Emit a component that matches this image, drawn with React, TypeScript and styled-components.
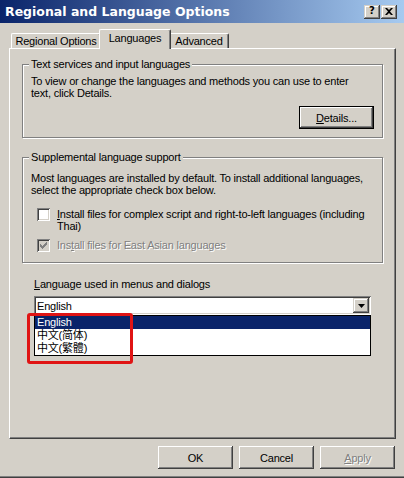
import styled, { createGlobalStyle } from 'styled-components'

const GlobalStyle = createGlobalStyle`
    html, body {
        margin: 0;
        padding: 0;
        background: #d4d0c8;
    }
    body {
        font-family: "Liberation Sans", Arial, "Noto Sans CJK SC", sans-serif;
        font-size: 11px;
        letter-spacing: -0.2px;
        color: #000;
    }
`

const languages = ['English', '中文(简体)', '中文(繁體)']

function App() {
    return (
        <>
            <GlobalStyle />
            <Window>
                <TitleBar>
                    <Title>Regional and Language Options</Title>
                    <CaptionButtons>
                        <CaptionButton>
                            <HelpGlyph>?</HelpGlyph>
                        </CaptionButton>
                        <CaptionButton>
                            <svg width="8" height="7" viewBox="0 0 8 7">
                                <path d="M0 0h2l2 2 2-2h2L5 3.5 8 7H6L4 5 2 7H0l3-3.5z" fill="#000" />
                            </svg>
                        </CaptionButton>
                    </CaptionButtons>
                </TitleBar>

                <TabRow>
                    <Tab $width={90}>Regional Options</Tab>
                    <Tab $width={72} $active>Languages</Tab>
                    <Tab $width={60}>Advanced</Tab>
                </TabRow>

                <Panel>
                    <Group $top={4}>
                        <Legend>Text services and input languages</Legend>
                        <Note>
                            To view or change the languages and methods you can use to enter
                            <br />
                            text, click Details.
                        </Note>
                        <ButtonRow>
                            <Button $default>
                                <u>D</u>etails...
                            </Button>
                        </ButtonRow>
                    </Group>

                    <Group $top={8} $space={13} $bottom={10}>
                        <Legend>Supplemental language support</Legend>
                        <Note>
                            Most languages are installed by default. To install additional languages,
                            <br />
                            select the appropriate check box below.
                        </Note>
                        <CheckRow $space={12}>
                            <CheckBox />
                            <span>
                                <u>I</u>nstall files for complex script and right-to-left languages (including
                                <br />
                                Thai)
                            </span>
                        </CheckRow>
                        <CheckRow $space={7} $disabled>
                            <CheckBox $disabled>
                                <svg width="7" height="7" viewBox="0 0 7 7">
                                    <path d="M0 2h1v1h1v1h1V3h1V2h1V1h1V0h1v3H6v1H5v1H4v1H3v1H2V6H1V5H0z" fill="#808080" />
                                </svg>
                            </CheckBox>
                            <span>
                                Ins<u>t</u>all files for East Asian languages
                            </span>
                        </CheckRow>
                    </Group>

                    <LanguageSection>
                        <FieldLabel>
                            <u>L</u>anguage used in menus and dialogs
                        </FieldLabel>
                        <Combo>
                            <ComboValue>English</ComboValue>
                            <DropButton>
                                <svg width="7" height="4" viewBox="0 0 7 4">
                                    <path d="M0 0h7L3.5 4z" fill="#000" />
                                </svg>
                            </DropButton>
                        </Combo>
                        <DropList>
                            {languages.map((lang, i) => (
                                <ListItem key={lang} $selected={i === 0}>{lang}</ListItem>
                            ))}
                            <Highlight />
                        </DropList>
                    </LanguageSection>
                </Panel>

                <Footer>
                    <Button>OK</Button>
                    <Button>Cancel</Button>
                    <Button disabled>
                        <u>A</u>pply
                    </Button>
                </Footer>
            </Window>
        </>
    )
}

const Window = styled.div`
    width: 404px;
    height: 478px;
    box-sizing: border-box;
    display: flex;
    flex-direction: column;
    background: #d4d0c8;
    border-bottom: 1px solid #404040;
    box-shadow: inset 0 -1px 0 #808080;
    overflow: hidden;
`

const TitleBar = styled.div`
    flex: none;
    height: 23px;
    display: flex;
    align-items: center;
    justify-content: space-between;
    padding: 0 7px 0 5px;
    background: linear-gradient(to right, #0a246a, #a6caf0);
`

const Title = styled.div`
    color: #fff;
    font-family: "DejaVu Sans", Verdana, sans-serif;
    font-weight: bold;
    font-size: 12.5px;
    letter-spacing: 0;
    white-space: nowrap;
`

const CaptionButtons = styled.div`
    display: flex;
    gap: 1px;
`

const CaptionButton = styled.div`
    width: 16px;
    height: 14px;
    box-sizing: border-box;
    display: flex;
    align-items: center;
    justify-content: center;
    background: #d4d0c8;
    box-shadow: inset -1px -1px 0 #404040, inset 1px 1px 0 #d4d0c8, inset -2px -2px 0 #808080, inset 2px 2px 0 #fff;
`

const HelpGlyph = styled.span`
    font-family: "DejaVu Sans", sans-serif;
    font-weight: bold;
    font-size: 10px;
    line-height: 10px;
    letter-spacing: 0;
    margin-top: -1px;
`

const TabRow = styled.div`
    flex: none;
    height: 20px;
    margin: 6px 0 -1px 11px;
    display: flex;
    align-items: flex-end;
    position: relative;
    z-index: 1;
`

const Tab = styled.div<{ $width: number; $active?: boolean }>`
    box-sizing: border-box;
    width: ${p => p.$width}px;
    height: ${p => (p.$active ? 20 : 15)}px;
    margin: ${p => (p.$active ? '0 -2px' : '0 0 1px')};
    padding-bottom: ${p => (p.$active ? 3 : 0)}px;
    display: flex;
    align-items: center;
    justify-content: center;
    background: #d4d0c8;
    border-top: 1px solid #fff;
    border-left: 1px solid #fff;
    border-right: 1px solid #404040;
    border-radius: 2px 2px 0 0;
    box-shadow: inset -1px 0 0 #808080;
    position: relative;
    z-index: ${p => (p.$active ? 2 : 1)};
    white-space: nowrap;
`

const Panel = styled.div`
    flex: 1;
    margin: 0 8px 0 9px;
    padding: 9px 12px 0;
    display: flex;
    flex-direction: column;
    border-top: 1px solid #fff;
    border-left: 1px solid #fff;
    border-right: 1px solid #404040;
    border-bottom: 1px solid #404040;
    box-shadow: inset -1px -1px 0 #808080;
`

const Group = styled.fieldset<{ $top: number; $space?: number; $bottom?: number }>`
    margin: ${p => p.$space || 0}px 0 0;
    padding: ${p => p.$top}px 8px ${p => p.$bottom || 8}px;
    min-width: 0;
    border: 1px solid #808080;
    box-shadow: 1px 1px 0 #fff, inset 1px 1px 0 #fff;
`

const Legend = styled.legend`
    padding: 0 2px;
    margin-left: -2px;
    line-height: 13px;
    background: #d4d0c8;
`

const Note = styled.p`
    margin: 0;
    line-height: 12px;
    white-space: nowrap;
`

const ButtonRow = styled.div`
    display: flex;
    justify-content: flex-end;
    margin-top: 7px;
`

const Button = styled.button<{ $default?: boolean }>`
    width: 75px;
    height: 23px;
    box-sizing: border-box;
    padding: 0;
    font: inherit;
    letter-spacing: inherit;
    color: #000;
    background: #d4d0c8;
    border: ${p => (p.$default ? '1px solid #000' : 'none')};
    box-shadow: ${p =>
        p.$default
            ? 'inset -1px -1px 0 #404040, inset 1px 1px 0 #fff, inset -2px -2px 0 #808080'
            : 'inset -1px -1px 0 #404040, inset 1px 1px 0 #fff, inset -2px -2px 0 #808080, inset 2px 2px 0 #d4d0c8'};

    &:disabled {
        color: #808080;
        text-shadow: 1px 1px 0 #fff;
    }
`

const CheckRow = styled.label<{ $space: number; $disabled?: boolean }>`
    display: flex;
    align-items: flex-start;
    gap: 7px;
    margin: ${p => p.$space}px 0 0 6px;
    line-height: 12px;
    white-space: nowrap;
    color: ${p => (p.$disabled ? '#808080' : '#000')};
    text-shadow: ${p => (p.$disabled ? '1px 1px 0 #fff' : 'none')};
`

const CheckBox = styled.span<{ $disabled?: boolean }>`
    flex: none;
    width: 13px;
    height: 13px;
    box-sizing: border-box;
    display: flex;
    align-items: center;
    justify-content: center;
    background: ${p => (p.$disabled ? '#d4d0c8' : '#fff')};
    box-shadow: inset 1px 1px 0 #808080, inset -1px -1px 0 #fff, inset 2px 2px 0 #404040, inset -2px -2px 0 #d4d0c8;
`

const LanguageSection = styled.div`
    margin-top: 15px;
    padding: 0 12px;
`

const FieldLabel = styled.div`
    line-height: 12px;
`

const Combo = styled.div`
    margin-top: 6px;
    height: 19px;
    box-sizing: border-box;
    padding: 2px;
    display: flex;
    align-items: stretch;
    background: #fff;
    box-shadow: inset 1px 1px 0 #808080, inset -1px -1px 0 #fff, inset 2px 2px 0 #404040, inset -2px -2px 0 #d4d0c8;
`

const ComboValue = styled.div`
    flex: 1;
    padding-left: 1px;
    display: flex;
    align-items: center;
`

const DropButton = styled.div`
    width: 16px;
    display: flex;
    align-items: center;
    justify-content: center;
    background: #d4d0c8;
    box-shadow: inset -1px -1px 0 #404040, inset 1px 1px 0 #d4d0c8, inset -2px -2px 0 #808080, inset 2px 2px 0 #fff;
`

const DropList = styled.div`
    position: relative;
    border: 1px solid #000;
    background: #fff;
`

const ListItem = styled.div<{ $selected?: boolean }>`
    height: 13px;
    line-height: 13px;
    padding-left: 2px;
    font-family: "Liberation Sans", "Noto Sans CJK SC", sans-serif;
    color: ${p => (p.$selected ? '#fff' : '#000')};
    background: ${p => (p.$selected ? '#0a246a' : 'transparent')};
`

const Highlight = styled.div`
    position: absolute;
    left: -8px;
    top: -3px;
    width: 106px;
    height: 51px;
    box-sizing: border-box;
    border: 3px solid #e01414;
    border-radius: 3px;
`

const Footer = styled.div`
    flex: none;
    display: flex;
    justify-content: flex-end;
    gap: 6px;
    margin: 7px 9px 8px 0;
`

export default App
